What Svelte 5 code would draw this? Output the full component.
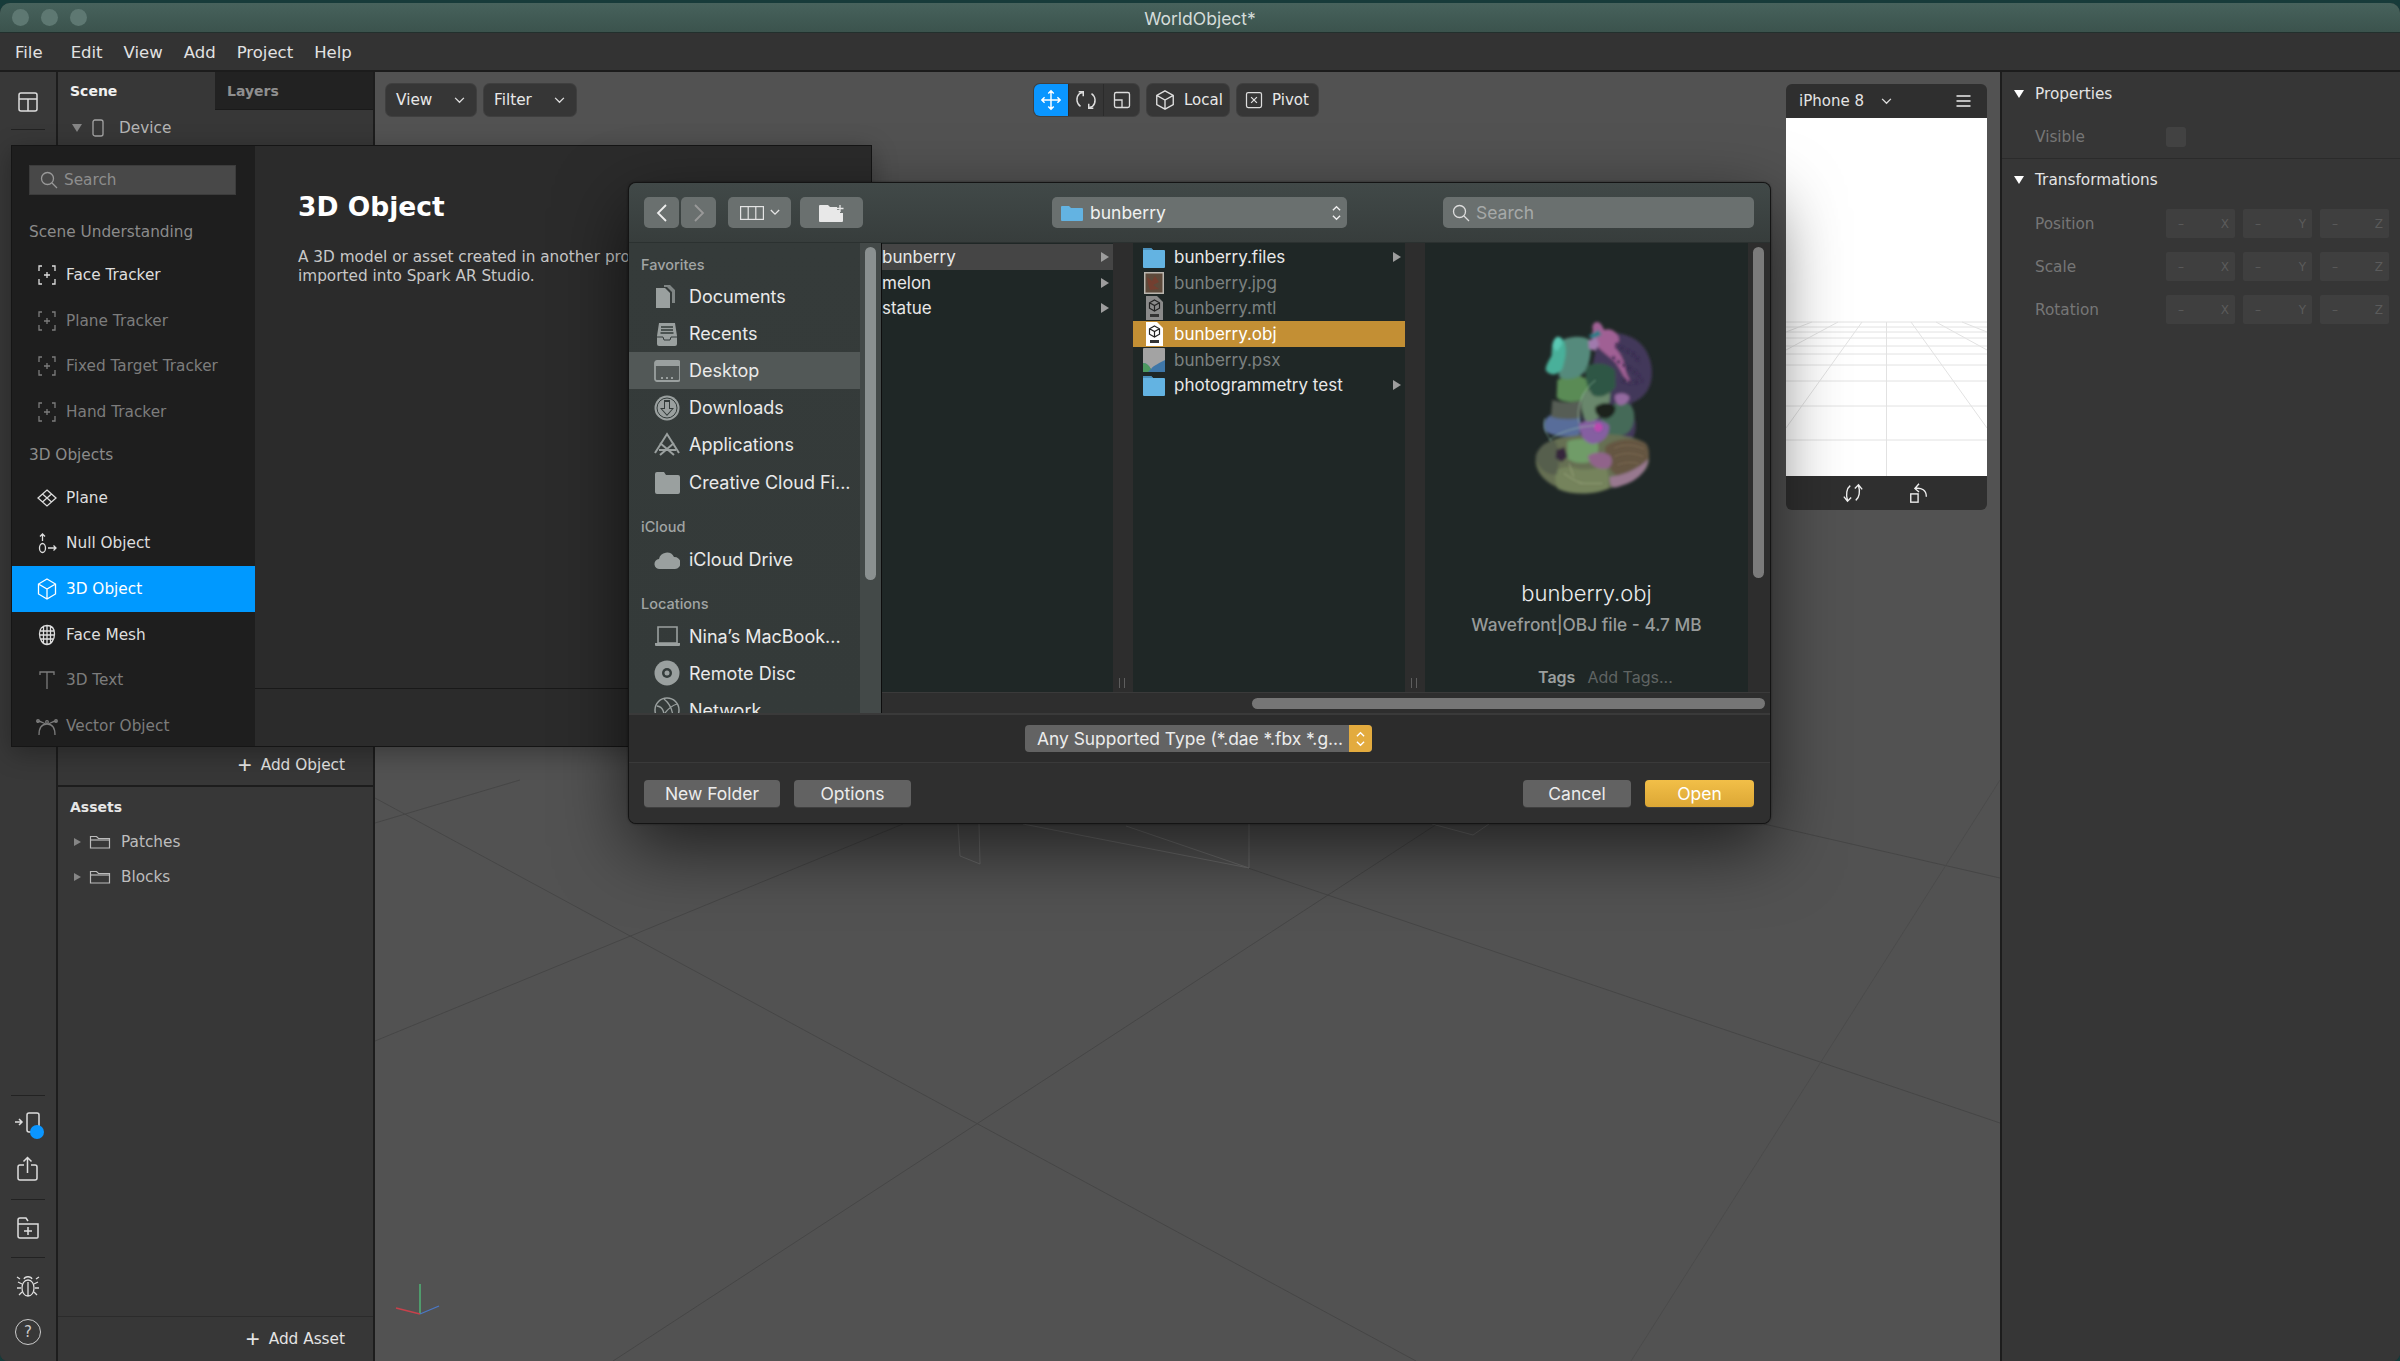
<script>
  const menu = ['File', 'Edit', 'View', 'Add', 'Project', 'Help'];

  const addList = [
    { head: 'Scene Understanding' },
    { label: 'Face Tracker', icon: 'tracker' },
    { label: 'Plane Tracker', icon: 'tracker', off: true },
    { label: 'Fixed Target Tracker', icon: 'tracker', off: true },
    { label: 'Hand Tracker', icon: 'tracker', off: true },
    { head: '3D Objects' },
    { label: 'Plane', icon: 'plane' },
    { label: 'Null Object', icon: 'null' },
    { label: '3D Object', icon: 'cube', active: true },
    { label: 'Face Mesh', icon: 'mesh' },
    { label: '3D Text', icon: 'text', off: true },
    { label: 'Vector Object', icon: 'vector', off: true }
  ];

  const sidebar = [
    { head: 'Favorites' },
    { label: 'Documents', icon: 'docs' },
    { label: 'Recents', icon: 'recents' },
    { label: 'Desktop', icon: 'desktop', active: true },
    { label: 'Downloads', icon: 'downloads' },
    { label: 'Applications', icon: 'apps' },
    { label: 'Creative Cloud Fi...', icon: 'folder' },
    { head: 'iCloud', gap: true },
    { label: 'iCloud Drive', icon: 'cloud' },
    { head: 'Locations', gap: true },
    { label: 'Nina’s MacBook...', icon: 'laptop' },
    { label: 'Remote Disc', icon: 'disc' },
    { label: 'Network', icon: 'network' }
  ];

  const folders = ['bunberry', 'melon', 'statue'];

  const files = [
    { name: 'bunberry.files', kind: 'dir' },
    { name: 'bunberry.jpg', kind: 'jpg', dim: true },
    { name: 'bunberry.mtl', kind: 'mtl', dim: true },
    { name: 'bunberry.obj', kind: 'obj', active: true },
    { name: 'bunberry.psx', kind: 'psx', dim: true },
    { name: 'photogrammetry test', kind: 'dir' }
  ];

  const transforms = ['Position', 'Scale', 'Rotation'];

  // floor grid of the viewport, page coordinates minus the viewport origin
  const grid = [
    [0, 726, 1041, 1289],
    [238, 1289, 1062, 752],
    [0, 969, 528, 752],
    [0, 751, 145, 708],
    [870, 795, 1625, 1051],
    [1389, 752, 1625, 806]
  ];
  const faint = [
    [583, 752, 585, 784], [585, 784, 605, 792], [605, 792, 604, 752],
    [648, 752, 874, 796], [751, 754, 874, 796], [874, 752, 874, 796],
    [1057, 752, 1098, 763], [1098, 763, 1114, 752]
  ];
</script>

{#snippet addIcon(name)}
  <svg class="ico" viewBox="0 0 22 24" width="22" height="24" fill="none" stroke="currentColor" stroke-width="1.3">
    {#if name === 'tracker'}
      <path d="M6 3H3v5M16 3h3v5M6 21H3v-5M16 21h3v-5M11 9v6M8 12h6" />
    {:else if name === 'plane'}
      <path d="M11 4l9 8-9 8-9-8zM6.5 8l9 8M15.5 8l-9 8" />
    {:else if name === 'null'}
      <ellipse cx="6.5" cy="17" rx="3" ry="4.5" /><path d="M6.5 10V3M4 5.500l2.500-2.500L9 5.500M12 17h8M17.500 14.500L20 17l-2.500 2.500" />
    {:else if name === 'cube'}
      <path d="M11 2l8.500 5v10L11 22l-8.500-5V7zM2.500 7L11 12l8.500-5M11 12v10" />
    {:else if name === 'mesh'}
      <path d="M11 2.500c5 0 7.500 3.500 7.500 8.500 0 6-3.500 10.500-7.500 10.500S3.500 17 3.500 11c0-5 2.500-8.500 7.500-8.500zM7.500 3.500v17M11 2.500v19M14.500 3.500v17M3.500 8h15M3.500 12h15M5 16h12" />
    {:else if name === 'text'}
      <path d="M4 7V4h14v3M11 4v17" />
    {:else if name === 'vector'}
      <path d="M3 21c0-7 3-11 8-11s8 4 8 11M1 7c6 0 6 3 10 3s4-3 10-3" /><circle cx="2" cy="7" r="1.300" /><circle cx="20" cy="7" r="1.300" /><circle cx="11" cy="8" r="1.300" />
    {/if}
  </svg>
{/snippet}

{#snippet placeIcon(name)}
  <svg class="place" viewBox="0 0 26 26" width="26" height="26" fill="#9aa09f">
    {#if name === 'docs'}
      <path d="M2 4h9l5 5v15H2z" /><path d="M10 1h6l5 5v13h-3V8l-5-5h-3z" opacity=".75" />
    {:else if name === 'recents'}
      <path d="M3 15l2-13h16l2 13v8a2 2 0 0 1-2 2H5a2 2 0 0 1-2-2z" /><path d="M7 6h12M7 9h12M6.500 12h13" stroke="#333b3a" stroke-width="1.300" /><path d="M3 16h6l1 3h6l1-3h6" fill="none" stroke="#333b3a" />
    {:else if name === 'desktop'}
      <rect x="1" y="3" width="25" height="20" rx="2" fill="none" stroke="#9aa09f" stroke-width="1.800" /><rect x="1" y="3" width="25" height="5" /><path d="M7 19h2v2H7zM12 19h2v2h-2zM17 19h2v2h-2z" />
    {:else if name === 'downloads'}
      <circle cx="13" cy="13" r="12.500" /><circle cx="13" cy="13" r="10" fill="none" stroke="#333b3a" stroke-width="1" /><path d="M10 5h6v8h4l-7 8-7-8h4z" fill="#333b3a" /><path d="M11 7h4v7h3l-5 5.500L8 14h3z" />
    {:else if name === 'apps'}
      <path d="M1 21L13 2l12 19M6 11l14 12M20 11L6 23M5 18h17" fill="none" stroke="#9aa09f" stroke-width="2" />
    {:else if name === 'folder'}
      <path d="M1 5a2 2 0 0 1 2-2h7l2 3h12a2 2 0 0 1 2 2v15a2 2 0 0 1-2 2H3a2 2 0 0 1-2-2z" />
    {:else if name === 'cloud'}
      <path d="M6 23a5 5 0 0 1-1-10 8 8 0 0 1 15-2 6 6 0 0 1 1 12z" />
    {:else if name === 'laptop'}
      <path d="M4 4h19v16H4z" fill="none" stroke="#9aa09f" stroke-width="1.600" /><path d="M1 20h25v2a1 1 0 0 1-1 1H2a1 1 0 0 1-1-1z" />
    {:else if name === 'disc'}
      <circle cx="13" cy="13" r="12.500" /><circle cx="13" cy="13" r="5" fill="#333b3a" /><circle cx="13" cy="13" r="2.500" />
    {:else if name === 'network'}
      <circle cx="13" cy="13" r="12" fill="none" stroke="#9aa09f" stroke-width="1.500" /><path d="M3 9c6 1 8 6 6 14M10 2c5 4 9 11 9 20M23 7c-6 2-11 6-15 14" fill="none" stroke="#9aa09f" stroke-width="1.300" />
    {/if}
  </svg>
{/snippet}

{#snippet fileIcon(kind)}
  <svg class="fileico" viewBox="0 0 22 24" width="22" height="24">
    {#if kind === 'dir'}
      <path d="M0 4a1 1 0 0 1 1-1h7l2 2h11a1 1 0 0 1 1 1v16a1 1 0 0 1-1 1H1a1 1 0 0 1-1-1z" fill="#63b3e2" /><path d="M0 4a1 1 0 0 1 1-1h7l2 2H0z" fill="#4a8fbb" />
    {:else if kind === 'jpg'}
      <rect x="1" y="1" width="20" height="22" fill="#b9b5ae" /><rect x="2.500" y="2.500" width="17" height="19" fill="#5d4a3b" /><path d="M4 6l5 4 3-5 4 6-6 3 6 4-9 1-2-6z" fill="#7d3a2c" opacity=".7" />
    {:else if kind === 'psx'}
      <rect x="0" y="0" width="22" height="24" rx="1" fill="#a3a3a3" /><path d="M0 24v-9c4 0 6 3 8 6 3-4 9-6 14-9v12z" fill="#3f77a8" /><path d="M0 15c4 0 6 3 8 6l-3 3H0z" fill="#4d9a60" />
    {:else}
      <path d="M3 0h11l6 6v18H3z" fill={kind === 'obj' ? '#fff' : '#8a8a8a'} />
      <path d="M11.500 4l5 2.800v5.400l-5 2.800-5-2.800V6.800zM6.500 6.800l5 2.800 5-2.800M11.500 9.600V15" fill="none" stroke="#222" stroke-width="1.200" />
      <rect x="7" y="18" width="9" height="3" fill="#333" />
    {/if}
  </svg>
{/snippet}

<div class="win">
  <header class="titlebar">
    <span class="lights"><i></i><i></i><i></i></span>
    <span class="title">WorldObject*</span>
  </header>

  <nav class="menubar">
    {#each menu as m}<span class="menu-item">{m}</span>{/each}
  </nav>

  <div class="work">
    <aside class="rail">
      <div class="rail-top">
        <svg viewBox="0 0 24 24" width="24" height="24" fill="none" stroke="#ddd" stroke-width="1.500"><rect x="3" y="3" width="18" height="18" rx="2" /><path d="M3 9h18M12 9v12" /></svg>
        <div class="rail-sep"></div>
      </div>
      <div class="rail-bottom">
        <div class="rail-sep"></div>
        <div class="device-ico">
          <svg viewBox="0 0 34 26" width="34" height="26" fill="none" stroke="#ddd" stroke-width="1.500"><rect x="14" y="2" width="12" height="19" rx="2" /><path d="M2 11h7M6 8l3 3-3 3" /></svg>
          <i class="dot"></i>
        </div>
        <svg class="r2" viewBox="0 0 24 26" width="24" height="26" fill="none" stroke="#ddd" stroke-width="1.500"><path d="M8 9H4a2 2 0 0 0-2 2v11a2 2 0 0 0 2 2h15a2 2 0 0 0 2-2V11a2 2 0 0 0-2-2h-4M11.500 17V2M7.500 5.500l4-4 4 4" /></svg>
        <div class="rail-sep s2"></div>
        <svg class="r3" viewBox="0 0 24 24" width="24" height="24" fill="none" stroke="#ddd" stroke-width="1.500"><path d="M2 20V4a2 2 0 0 1 2-2h6l2 3M2 8h20v13a1 1 0 0 1-1 1H4a2 2 0 0 1-2-2zM12 11v8M8 15h8" /></svg>
        <div class="rail-sep s3"></div>
        <svg class="r4" viewBox="0 0 24 24" width="24" height="24" fill="none" stroke="#ddd" stroke-width="1.300"><path d="M12 6c4 0 6 4 6 8s-2 8-6 8-6-4-6-8 2-8 6-8zM12 8v14M8 5c1-3 7-3 8 0M6 10L2 8M18 10l4-2M5 14H1M19 14h4M6 18l-3 3M18 18l3 3M1 3l3 2M23 3l-3 2" /></svg>
        <span class="help">?</span>
      </div>
    </aside>

    <section class="scene">
      <div class="scene-top">
        <div class="tabs"><span class="tab on">Scene</span><span class="tab">Layers</span></div>
        <div class="device-row">
          <i class="tri-down"></i>
          <svg viewBox="0 0 14 20" width="14" height="20" fill="none" stroke="#a5a5a5" stroke-width="1.300"><rect x="2" y="2" width="10" height="16" rx="2" /></svg>
          <span>Device</span>
        </div>
        <div class="add-row"><span class="plus">+</span>Add Object</div>
      </div>
      <div class="assets">
        <div class="assets-head">Assets</div>
        {#each ['Patches', 'Blocks'] as a}
          <div class="asset">
            <i class="tri-right"></i>
            <svg viewBox="0 0 22 16" width="22" height="16" fill="none" stroke="#bbb" stroke-width="1.200"><path d="M1.500 14V2.500h6l2 2h11V14z" /><path d="M1.500 6h19" /></svg>
            <span>{a}</span>
          </div>
        {/each}
        <div class="add-row foot"><span class="plus">+</span>Add Asset</div>
      </div>
    </section>

    <main class="viewport">
      <svg class="floor" viewBox="0 0 1625 1289" width="1625" height="1289" fill="none">
        {#each grid as [x1, y1, x2, y2]}
          <line {x1} {y1} {x2} {y2} stroke="#464646" />
        {/each}
        <line x1="1256" y1="1289" x2="1625" y2="708" stroke="#4b4b4b" />
        {#each faint as [x1, y1, x2, y2]}
          <line {x1} {y1} {x2} {y2} stroke="#6a6a6a" />
        {/each}
        <line x1="45" y1="1242" x2="45" y2="1212" stroke="#4fc37b" stroke-width="1.300" />
        <line x1="45" y1="1242" x2="21" y2="1236" stroke="#c8414b" stroke-width="1.300" />
        <line x1="45" y1="1242" x2="64" y2="1234" stroke="#4a78c8" stroke-width="1.300" />
      </svg>

      <div class="toolbar">
        <div class="drop">View<svg viewBox="0 0 12 8" width="11" height="7"><path d="M1 1l5 5 5-5" fill="none" stroke="#ddd" stroke-width="1.500" /></svg></div>
        <div class="drop filter">Filter<svg viewBox="0 0 12 8" width="11" height="7"><path d="M1 1l5 5 5-5" fill="none" stroke="#ddd" stroke-width="1.500" /></svg></div>
        <div class="tgroup">
          <span class="tbtn on">
            <svg viewBox="0 0 24 24" width="22" height="22" fill="none" stroke="#fff" stroke-width="1.600"><path d="M12 2v20M2 12h20M9 5l3-3 3 3M9 19l3 3 3-3M5 9l-3 3 3 3M19 9l3 3-3 3" /></svg>
          </span>
          <span class="tbtn">
            <svg viewBox="0 0 24 24" width="22" height="22" fill="none" stroke="#ddd" stroke-width="1.600"><path d="M18 5a9 9 0 0 1 1 14l-3 1M6 19A9 9 0 0 1 5 5l3-1M15 16v5h5M9 8V3H4" /></svg>
          </span>
          <span class="tbtn">
            <svg viewBox="0 0 24 24" width="20" height="20" fill="none" stroke="#ddd" stroke-width="1.600"><rect x="3" y="3" width="18" height="18" rx="2" /><path d="M3 12h9v9" /></svg>
          </span>
        </div>
        <div class="tool local">
          <svg viewBox="0 0 24 24" width="22" height="22" fill="none" stroke="#ddd" stroke-width="1.500"><path d="M12 2l9 5v10l-9 5-9-5V7zM3 7l9 5 9-5M12 12v10" /></svg>Local
        </div>
        <div class="tool pivot">
          <svg viewBox="0 0 24 24" width="20" height="20" fill="none" stroke="#ddd" stroke-width="1.500"><rect x="3" y="3" width="18" height="18" rx="2" /><path d="M8.500 8.500l7 7M15.500 8.500l-7 7" /></svg>Pivot
        </div>
      </div>

      <div class="phone">
        <div class="phone-head">
          <span>iPhone 8</span>
          <svg viewBox="0 0 12 8" width="11" height="7"><path d="M1 1l5 5 5-5" fill="none" stroke="#ddd" stroke-width="1.500" /></svg>
          <svg class="burger" viewBox="0 0 14 12" width="15" height="12"><path d="M0 1h14M0 6h14M0 11h14" stroke="#eee" stroke-width="1.400" /></svg>
        </div>
        <div class="phone-screen">
          <svg viewBox="0 0 201 358" width="201" height="358" fill="none" stroke="#e2e2e2">
            <path d="M0 204h201M0 209h201M0 214h201M0 220h201M0 228h201M0 236h201M0 247h201M0 263h201M0 288h201M0 322h201" />
            <path d="M100.500 204v154M76 204L0 310M52 204L0 232M26 204L0 214M125 204l76 106M150 204l51 28M176 204l25 10" />
          </svg>
        </div>
        <div class="phone-foot">
          <svg viewBox="0 0 24 24" width="22" height="22" fill="none" stroke="#eee" stroke-width="1.500"><path d="M9 4C5 7 4 14 6 20M15 20c4-3 5-10 3-16M2 16l4 5 4-4M14 7l4-4 4 5" /></svg>
          <svg viewBox="0 0 24 24" width="22" height="22" fill="none" stroke="#eee" stroke-width="1.500"><rect x="3" y="13" width="8" height="9" /><path d="M20 16C20 9 15 6 8 7M12 2L7.500 7l4.500 4" /></svg>
        </div>
      </div>

      <aside class="popup">
        <div class="popup-list">
          <div class="popup-search">
            <svg viewBox="0 0 18 18" width="18" height="18" fill="none" stroke="#999" stroke-width="1.300"><circle cx="7.500" cy="7.500" r="6" /><path d="M12 12l5 5" /></svg>
            Search
          </div>
          {#each addList as it}
            {#if it.head}
              <div class="pl-head">{it.head}</div>
            {:else}
              <div class="pl-row" class:off={it.off} class:active={it.active}>
                {@render addIcon(it.icon)}
                <span>{it.label}</span>
              </div>
            {/if}
          {/each}
        </div>
        <div class="popup-main">
          <div class="popup-body">
            <h1>3D Object</h1>
            <p>A 3D model or asset created in another program and<br />imported into Spark AR Studio.</p>
          </div>
          <div class="popup-foot"></div>
        </div>
      </aside>
    </main>

    <aside class="props">
      <div class="prop-sec first">
        <div class="prop-head"><i class="tri-white"></i>Properties</div>
        <div class="prop-row"><span class="prop-label">Visible</span><span class="check"></span></div>
      </div>
      <div class="prop-sec">
        <div class="prop-head"><i class="tri-white"></i>Transformations</div>
        {#each transforms as t}
          <div class="prop-row vec">
            <span class="prop-label">{t}</span>
            {#each ['X', 'Y', 'Z'] as axis}
              <span class="num"><b>–</b><em>{axis}</em></span>
            {/each}
          </div>
        {/each}
      </div>
    </aside>
  </div>

  <div class="dialog">
    <div class="dlg-head">
      <div class="navpair">
        <span class="dbtn nav"><svg viewBox="0 0 14 20" width="14" height="20"><path d="M11 2L3 10l8 8" fill="none" stroke="#eee" stroke-width="1.800" /></svg></span>
        <span class="dbtn nav"><svg viewBox="0 0 14 20" width="14" height="20"><path d="M3 2l8 8-8 8" fill="none" stroke="#999" stroke-width="1.800" /></svg></span>
      </div>
      <span class="dbtn colview">
        <svg viewBox="0 0 24 14" width="24" height="14" fill="none" stroke="#e4e4e4" stroke-width="1.200"><rect x=".6" y=".6" width="22.800" height="12.800" /><path d="M8.200 .6v12.800M15.800 .6v12.800" /></svg>
        <svg viewBox="0 0 12 8" width="10" height="7"><path d="M1 1l5 5 5-5" fill="none" stroke="#e4e4e4" stroke-width="1.600" /></svg>
      </span>
      <span class="dbtn newfold">
        <svg viewBox="0 0 26 18" width="26" height="18"><path d="M0 2a1 1 0 0 1 1-1h8l2 2h7v3h3v3h3v8a1 1 0 0 1-1 1H1a1 1 0 0 1-1-1z" fill="#e8e8e8" /><path d="M21 1v7M17.500 4.500h7" stroke="#e8e8e8" stroke-width="1.300" /></svg>
      </span>
      <span class="dbtn path">
        <svg viewBox="0 0 22 16" width="22" height="16"><path d="M0 2a1 1 0 0 1 1-1h7l2 2h11a1 1 0 0 1 1 1v11a1 1 0 0 1-1 1H1a1 1 0 0 1-1-1z" fill="#63b3e2" /></svg>
        <span class="pathname">bunberry</span>
        <svg class="updown" viewBox="0 0 12 20" width="11" height="18" fill="none" stroke="#eee" stroke-width="1.500"><path d="M2 7l4-4 4 4M2 13l4 4 4-4" /></svg>
      </span>
      <span class="dbtn dsearch">
        <svg viewBox="0 0 18 18" width="18" height="18" fill="none" stroke="#ddd" stroke-width="1.300"><circle cx="7.500" cy="7.500" r="6" /><path d="M12 12l5 5" /></svg>
        Search
      </span>
    </div>

    <div class="browser">
      <div class="sidebar">
        {#each sidebar as s}
          {#if s.head}
            <div class="side-head" class:gap={s.gap}>{s.head}</div>
          {:else}
            <div class="side-row" class:active={s.active}>
              {@render placeIcon(s.icon)}
              <span>{s.label}</span>
            </div>
          {/if}
        {/each}
      </div>
      <div class="side-scroll"><i></i></div>

      <div class="cols">
        <div class="col-area">
          <div class="col c1">
            {#each folders as f, i}
              <div class="frow" class:cur={i === 0}><span>{f}</span><i class="tri-gray"></i></div>
            {/each}
          </div>
          <div class="gutter"><span class="grip"></span></div>
          <div class="col c2">
            {#each files as f}
              <div class="frow file" class:sel={f.active} class:dim={f.dim}>
                {@render fileIcon(f.kind)}
                <span>{f.name}</span>
                {#if f.kind === 'dir'}<i class="tri-gray"></i>{/if}
              </div>
            {/each}
          </div>
          <div class="gutter"><span class="grip"></span></div>
          <div class="preview">
            <!-- painted model, drawn in a 3x grid so the patches can be placed from the reference -->
            <svg class="bunny" viewBox="0 0 600 630" width="200" height="210">
              <defs>
                <filter id="soft"><feGaussianBlur stdDeviation="5" /></filter>
                <filter id="soft2"><feGaussianBlur stdDeviation="3" /></filter>
              </defs>
              <g filter="url(#soft)">
                <path d="M300 100c50-6 110 0 140 50 24 40 24 90 6 120-12 20-30 32-50 40l14 60c4 40-20 60-30 66l-60 10-70-90z" fill="#43385a" />
                <path d="M320 320c30-10 60-20 78 0 14 20 10 60-14 80l-50 20-40-40z" fill="#456a58" />
                <path d="M110 480c2-30 30-56 70-66 60-14 180-20 240 6 24 10 32 36 30 62-4 34-40 58-90 72-50 22-110 36-170 14-50-18-80-50-80-88z" fill="#667052" />
                <path d="M318 440c30-26 90-30 120-12 12 8 14 36 10 52-14 24-60 44-96 46-24-16-34-50-34-86z" fill="#655642" />
                <path d="M332 530c30 0 80-18 116-52-4 40-40 70-90 82-16 6-26 2-26-30z" fill="#98788f" />
                <path d="M172 510c20-10 40-12 60-4 30 6 60-2 88-6 10 20 12 46 6 66-30 14-100 24-150 0-8-20-10-40-4-56z" fill="#75835c" />
                <path d="M110 470c6-26 30-46 56-50 16 20 18 70 6 104-30 2-58-20-62-54z" fill="#565e4e" />
                <path d="M205 425c20-10 60-12 90 0 8 20 0 50-20 60-26 8-56 4-70-10z" fill="#6f9c68" />
                <path d="M266 468c20-14 56-14 70 2 6 14 2 32-14 36-20 2-50-4-56-38z" fill="#90648a" />
                <path d="M172 450l24-8 10 28-18 16-18-12z" fill="#35283a" />
                <path d="M140 395c-10-20-6-40 16-50l90-6-4 66c-30 6-70 8-102-10z" fill="#586d9a" />
                <path d="M160 300c30 10 60 10 90 0l-6 55c-30 4-60 4-88-4z" fill="#565d54" />
                <path d="M175 240c30-16 70-20 90 0 10 20 0 50-16 60-24 8-60 10-76-8z" fill="#5a8b55" />
                <path d="M240 370c30-14 70-14 90 6 4 30-20 54-50 56-26-4-40-30-40-62z" fill="#855ea1" />
                <path d="M250 285c20-24 60-30 85-14l-4 40c-20 40-50 60-70 52-14-22-18-50-11-78z" fill="#69876c" />
                <path d="M195 118c26-12 60-10 78 2 6 30 0 80-20 100-20 18-50 22-74 10z" fill="#558a7b" />
                <path d="M140 210c0-16 12-30 18-44 0-24 4-50 18-56 10 0 20 8 22 24 6 24-2 52-8 72-12 20-38 24-50 4z" fill="#48b09a" />
                <path d="M160 140c0-14 6-26 16-30 10 2 14 12 12 24l-14 20z" fill="#5ac8b4" />
                <path d="M262 200c24-14 60-14 86 10l2 50c-16 24-50 38-70 24-16-24-26-56-18-84z" fill="#2d5645" />
                <path d="M282 90c-6-14 4-24 12-24 12 0 16 14 22 24 18-8 40 6 44 26 0 14-10 20-14 26 18 16 30 40 34 70 6 20 14 24 12 36-20-14-26-40-44-62-14-16-44-34-62-58-8-14-8-28-4-38z" fill="#a06094" />
                <path d="M268 108l30-18 10 14-26 14z" fill="#2d7c88" />
                <path d="M268 122l24-10 8 22-12 18-18-6z" fill="#a07aad" />
                <path d="M348 286c14-10 34-8 44 6-2 12-14 24-28 24-12-2-18-16-16-30z" fill="#946ba0" />
                <path d="M288 322c14-16 44-18 60-4 6 14-6 34-26 38-20 2-36-14-34-34z" fill="#1c231e" />
              </g>
              <g filter="url(#soft2)">
                <path d="M150 420c40-30 90-40 140-44M290 240c-40 30-60 80-50 130" fill="none" stroke="#a5d0b0" stroke-width="4" opacity=".4" />
                <path d="M138 355c-8 30 6 50 20 70" fill="none" stroke="#9fd6c6" stroke-width="3" opacity=".5" />
                <circle cx="298" cy="382" r="13" fill="#d23eb5" opacity=".7" />
                <path d="M350 130c30 30 60 20 70 60M340 170c30 30 60 30 80 60M370 240c20 10 40 10 60 0" fill="none" stroke="#34294a" stroke-width="9" stroke-dasharray="10 9" opacity=".7" />
                <path d="M345 445c25-12 55-14 90 2M345 470c25-12 55-14 88 0M355 495c20-8 40-10 65-4" fill="none" stroke="#87745a" stroke-width="3" opacity=".7" />
                <path d="M210 490l14 40M240 550h70M195 520c20 14 40 30 60 30" fill="none" stroke="#a3ad85" stroke-width="4" opacity=".5" />
              </g>
            </svg>
            <div class="pv-name">bunberry.obj</div>
            <div class="pv-meta">Wavefront|OBJ file - 4.7 MB</div>
            <div class="pv-tags"><b>Tags</b><span>Add Tags...</span></div>
          </div>
          <div class="pv-scroll"><i></i></div>
        </div>
        <div class="hscroll"><i></i></div>
      </div>
    </div>

    <div class="filter-row">
      <span class="type-pop"><span class="type-text">Any Supported Type (*.dae *.fbx *.g...</span>
        <span class="type-cap"><svg viewBox="0 0 12 20" width="11" height="18" fill="none" stroke="#fff" stroke-width="1.500"><path d="M2 7l4-4 4 4M2 13l4 4 4-4" /></svg></span>
      </span>
    </div>

    <div class="dlg-foot">
      <span class="pbtn w136">New Folder</span>
      <span class="pbtn w117">Options</span>
      <span class="pbtn w108 right">Cancel</span>
      <span class="pbtn w109 open">Open</span>
    </div>
  </div>
</div>

<style>
  :global(body) {
    margin: 0;
    background: #173b3a;
    overflow: hidden;
  }

  .win {
    position: relative;
    width: 2400px;
    height: 1358px;
    margin-top: 3px;
    border-radius: 10px 10px 8px 8px;
    overflow: hidden;
    display: flex;
    flex-direction: column;
    background: #363636;
    font-family: "DejaVu Sans", sans-serif;
    font-size: 15.300px;
    color: #ddd;
  }

  .titlebar {
    height: 30px;
    flex: none;
    position: relative;
    display: flex;
    align-items: center;
    justify-content: center;
    padding-top: 2px;
    background: linear-gradient(#47625c, #3b534d);
    border-bottom: 1px solid #22302d;
    box-sizing: border-box;
  }
  .title { color: #d5dcda; font-family: Inter, sans-serif; font-size: 17.500px; }
  .lights { position: absolute; left: 12px; top: 6px; display: flex; gap: 12px; }
  .lights i { width: 17px; height: 17px; border-radius: 50%; background: #5e7872; }

  .menubar {
    height: 39px;
    flex: none;
    display: flex;
    align-items: center;
    padding: 2px 0 0 15px;
    gap: 21px;
    background: #333;
    border-bottom: 2px solid #1c1c1c;
    box-sizing: border-box;
    font-size: 16.500px;
    color: #e2e2e2;
  }
  .menu-item:first-child { margin-right: 7px; }

  .work { flex: 1; display: flex; min-height: 0; }

  .rail {
    width: 56px;
    flex: none;
    display: flex;
    flex-direction: column;
    justify-content: space-between;
    background: #383838;
    border-right: 2px solid #1d1d1d;
    align-items: center;
  }
  .rail-top { padding-top: 18px; display: flex; flex-direction: column; align-items: center; }
  .rail-sep { width: 34px; height: 1px; background: #222; margin-top: 15px; }
  .rail-bottom { display: flex; flex-direction: column; align-items: center; padding-bottom: 16px; }
  .device-ico { position: relative; margin-top: 15px; height: 28px; margin-left: 4px; }
  .dot { position: absolute; left: 17px; top: 14px; width: 14px; height: 14px; border-radius: 50%; background: #0a96ff; }
  .r2 { margin-top: 17px; }
  .s2 { margin-top: 17px; }
  .r3 { margin-top: 16px; }
  .s3 { margin-top: 17px; }
  .r4 { margin-top: 16px; }
  .help {
    margin-top: 21px;
    width: 24px;
    height: 24px;
    border: 1.500px solid #ccc;
    border-radius: 50%;
    text-align: center;
    line-height: 24px;
    font-size: 15px;
    color: #ccc;
  }

  .scene {
    width: 315px;
    flex: none;
    display: flex;
    flex-direction: column;
    border-right: 2px solid #1d1d1d;
    background: #373737;
  }
  .scene-top {
    height: 715px;
    flex: none;
    display: flex;
    flex-direction: column;
    border-bottom: 2px solid #1d1d1d;
    box-sizing: border-box;
  }
  .tabs { display: flex; height: 38px; flex: none; }
  .tab {
    width: 158px;
    background: #222;
    padding: 11px 0 0 12px;
    box-sizing: border-box;
    color: #8f8f8f;
    font-weight: bold;
    font-size: 14px;
    border-bottom: 1px solid #1a1a1a;
  }
  .tab.on { background: #373737; color: #f0f0f0; border-bottom: 0; width: 157px; padding-left: 12px; }
  .device-row { display: flex; align-items: center; gap: 9px; padding: 8px 0 0 14px; color: #b5b5b5; }
  .device-row span { margin-left: 5px; }
  .tri-down { width: 0; height: 0; border: 5.500px solid transparent; border-top: 8px solid #858585; border-bottom: 0; }
  .tri-right { width: 0; height: 0; border: 4.500px solid transparent; border-left: 7px solid #858585; border-right: 0; }

  .add-row {
    margin-top: auto;
    height: 40px;
    display: flex;
    align-items: center;
    justify-content: flex-end;
    padding-right: 28px;
    color: #e4e4e4;
    flex: none;
  }
  .plus { font-size: 24px; font-weight: 200; margin-right: 9px; line-height: 1; font-family: "Liberation Sans", sans-serif; }
  .foot { height: 44px; padding-right: 28px; border-top: 1px solid #2b2b2b; }

  .assets { flex: 1; display: flex; flex-direction: column; }
  .assets-head { font-weight: bold; font-size: 14px; padding: 12px 0 0 12px; color: #e6e6e6; height: 25px; }
  .asset { display: flex; align-items: center; gap: 8px; height: 35px; padding-left: 16px; color: #bdbdbd; }
  .asset span { margin-left: 2px; }

  .viewport {
    flex: 1;
    position: relative;
    background: #525252;
    min-width: 0;
  }
  .floor { position: absolute; left: 0; top: 0; }

  .toolbar {
    position: relative;
    display: flex;
    align-items: flex-start;
    padding: 12px 0 0 11px;
    gap: 8px;
  }
  .drop, .tool, .tgroup {
    height: 32px;
    background: #363636;
    border-radius: 6px;
    box-shadow: 0 0 0 1px #3f3f3f;
    display: flex;
    align-items: center;
    box-sizing: border-box;
    color: #e8e8e8;
  }
  .drop { width: 90px; padding: 0 11px 0 10px; justify-content: space-between; }
  .filter { width: 92px; }
  .tgroup { margin-left: 450px; overflow: hidden; }
  .tbtn { width: 35px; height: 32px; display: flex; align-items: center; justify-content: center; border-right: 1px solid #2b2b2b; box-sizing: border-box; }
  .tbtn:last-child { border-right: 0; }
  .tbtn.on { background: #0a96ff; }
  .tool { gap: 8px; padding-left: 7px; white-space: nowrap; font-size: 15px; }
  .local { width: 82px; }
  .pivot { width: 81px; }

  .phone {
    position: absolute;
    left: 1411px;
    top: 12px;
    width: 201px;
    border-radius: 6px;
    overflow: hidden;
    background: #2f2f2f;
  }
  .phone-head { height: 34px; display: flex; align-items: center; padding: 0 16px 0 13px; gap: 17px; color: #e4e4e4; font-size: 15px; }
  .burger { margin-left: auto; }
  .phone-screen { height: 358px; background: #fff; }
  .phone-screen svg { display: block; }
  .phone-foot { height: 34px; display: flex; align-items: center; justify-content: center; gap: 44px; margin-left: -2px; }

  .popup {
    position: absolute;
    left: -364px;
    top: 73px;
    width: 861px;
    height: 602px;
    display: flex;
    border: 1px solid #151515;
    box-sizing: border-box;
    background: #2b2b2b;
    box-shadow: 0 6px 24px rgba(0, 0, 0, 0.3);
  }
  .popup-list { width: 243px; flex: none; background: #1e1e1e; display: flex; flex-direction: column; overflow: hidden; }
  .popup-search {
    margin: 19px 0 0 17px;
    width: 207px;
    height: 30px;
    flex: none;
    background: #484848;
    border: 1px solid #3c3c3c;
    box-sizing: border-box;
    display: flex;
    align-items: center;
    gap: 6px;
    padding-left: 10px;
    color: #8d8d8d;
  }
  .pl-head { height: 40px; display: flex; align-items: center; padding-left: 17px; color: #8b8b8b; flex: none; }
  .popup-search + .pl-head { margin-top: 15px; height: 42px; padding-top: 2px; box-sizing: border-box; }
  .pl-row { height: 45.700px; flex: none; display: flex; align-items: center; padding-left: 24px; gap: 8px; color: #dedede; }
  .pl-row.off { color: #7c7c7c; }
  .pl-row.active { background: #0099ff; color: #fff; }
  .ico { flex: none; }
  .popup-main { flex: 1; display: flex; flex-direction: column; }
  .popup-body { flex: 1; padding: 0 0 0 43px; }
  h1 { margin: 41px 0 0; font-size: 26.500px; line-height: 40px; color: #fff; font-weight: bold; }
  p { margin: 21px 0 0; font-size: 15.300px; line-height: 18.500px; color: #c8c8c8; white-space: nowrap; }
  .popup-foot { height: 57px; flex: none; border-top: 1px solid #191919; }

  .props {
    width: 400px;
    flex: none;
    background: #363636;
    border-left: 2px solid #1d1d1d;
    box-sizing: border-box;
  }
  .prop-sec.first { border-bottom: 1px solid #2b2b2b; height: 87px; box-sizing: border-box; }
  .prop-head { display: flex; align-items: center; height: 44px; padding-left: 12px; gap: 11px; color: #e4e4e4; }
  .prop-sec:not(.first) .prop-head { height: 42px; margin-bottom: 8px; }
  .prop-sec.first .prop-row { margin-top: 6px; }
  .tri-white { width: 0; height: 0; border: 5.500px solid transparent; border-top: 8px solid #fff; border-bottom: 0; }
  .prop-row { display: flex; align-items: center; height: 30px; padding-left: 33px; color: #767676; }
  .prop-row.vec { height: 29px; margin-bottom: 14px; }
  .prop-label { width: 131px; flex: none; }
  .check { width: 20px; height: 20px; background: #424242; border-radius: 3px; }
  .num {
    width: 69px;
    height: 29px;
    margin-right: 8px;
    background: #3f3f3f;
    border-radius: 2px;
    display: flex;
    align-items: center;
    justify-content: space-between;
    padding: 0 6px 0 12px;
    box-sizing: border-box;
    color: #5b5b5b;
    font-size: 12px;
  }
  .num b { font-weight: normal; }
  .num em { font-style: normal; }

  /* file dialog sheet */
  .dialog {
    position: absolute;
    left: 629px;
    top: 180px;
    width: 1141px;
    height: 640px;
    display: flex;
    flex-direction: column;
    border-radius: 7px;
    background: #2e2e2e;
    box-shadow: 0 0 0 1px #141414, 0 0 3px #000, 0 24px 70px rgba(0, 0, 0, 0.62);
    overflow: hidden;
    font-family: Inter, "Liberation Sans", sans-serif;
    font-size: 17px;
    color: #e8e8e8;
  }
  .dlg-head {
    height: 60px;
    flex: none;
    position: relative;
    display: flex;
    align-items: center;
    padding-left: 15px;
    gap: 12px;
    background: linear-gradient(#414948, #373d3c);
    border-bottom: 1px solid #2b3130;
    box-sizing: border-box;
  }
  .dbtn {
    height: 31px;
    background: #6a706f;
    border-radius: 5px;
    display: flex;
    align-items: center;
    justify-content: center;
    box-sizing: border-box;
  }
  .navpair { display: flex; gap: 2px; }
  .nav { width: 35px; }
  .colview { width: 63px; gap: 6px; }
  .newfold { width: 63px; margin-left: -3px; }
  .path {
    position: absolute;
    left: 423px;
    top: 14px;
    width: 295px;
    justify-content: flex-start;
    padding-left: 9px;
    gap: 7px;
  }
  .pathname { font-size: 17.500px; color: #f0f0f0; }
  .updown { margin-left: auto; margin-right: 5px; }
  .dsearch {
    position: absolute;
    left: 814px;
    top: 14px;
    width: 311px;
    justify-content: flex-start;
    padding-left: 9px;
    gap: 6px;
    color: #a6a9a8;
    font-size: 17.500px;
  }

  .browser { height: 472px; flex: none; display: flex; border-bottom: 2px solid #3a3a3a; box-sizing: border-box; }
  .sidebar {
    width: 231px;
    flex: none;
    overflow: hidden;
    background: linear-gradient(#353b3a, #343a39);
  }
  .side-head { height: 24px; padding: 11px 0 0 12px; font-size: 14.500px; font-weight: 500; color: #a1a5a4; line-height: 21px; box-sizing: content-box; }
  .side-head.gap { padding-top: 15px; height: 25px; }
  .side-row {
    height: 37.100px;
    display: flex;
    align-items: center;
    gap: 9px;
    padding-left: 25px;
    white-space: nowrap;
    font-size: 18px;
    color: #eaeaea;
  }
  .side-row.active { background: #525857; }
  .place { flex: none; }
  .side-scroll { width: 22px; flex: none; background: #434948; border-right: 1px solid #0d0d0d; box-sizing: border-box; }
  .side-scroll i { display: block; width: 11px; height: 333px; margin: 4px 0 0 5px; border-radius: 6px; background: #8a9090; }

  .cols { flex: 1; display: flex; flex-direction: column; min-width: 0; }
  .col-area { height: 450px; flex: none; display: flex; border-bottom: 1px solid #3a3a3a; box-sizing: border-box; background: #2d2d2d; }
  .col { background: #1f2726; padding-top: 1px; box-sizing: border-box; }
  .c1 { width: 231px; }
  .c2 { width: 272px; }
  .gutter { width: 20px; flex: none; position: relative; }
  .grip { position: absolute; left: 6px; bottom: 4px; width: 2px; height: 10px; border-left: 1px solid #5e5e5e; border-right: 1px solid #5e5e5e; padding: 0 1px; }
  .frow {
    height: 25.700px;
    display: flex;
    align-items: center;
    justify-content: space-between;
    padding-right: 4px;
    color: #e8e8e8;
    box-sizing: border-box;
  }
  .frow.cur { background: #454545; }
  .tri-gray { width: 0; height: 0; border: 5px solid transparent; border-left: 8px solid #9d9d9d; border-right: 0; }
  .file { justify-content: flex-start; padding-left: 10px; gap: 9px; }
  .file .tri-gray { margin-left: auto; }
  .file.dim { color: #7c8180; }
  .file.sel { background: #c38f34; color: #fff; }
  .fileico { flex: none; }

  .preview {
    width: 323px;
    flex: none;
    background: #1f2726;
    position: relative;
    display: flex;
    flex-direction: column;
    align-items: center;
  }
  .bunny { position: absolute; left: 74px; top: 57px; }
  .pv-name { margin-top: 337px; font-size: 22px; font-weight: 300; color: #ececec; }
  .pv-meta { margin-top: 8px; font-size: 17.300px; font-weight: 500; color: #979b9a; }
  .pv-tags { position: absolute; left: 113px; bottom: 5px; font-size: 16px; color: #5f6463; display: flex; gap: 12px; }
  .pv-tags b { color: #9b9f9e; font-weight: 600; }
  .pv-scroll { width: 21px; flex: none; background: #2d2d2d; }
  .pv-scroll i { display: block; width: 11px; height: 331px; margin: 4px 0 0 5px; border-radius: 6px; background: #7b7b7b; }
  .hscroll { flex: 1; position: relative; }
  .hscroll i { position: absolute; left: 370px; right: 5px; top: 5px; height: 11px; border-radius: 6px; background: #767676; }

  .filter-row { height: 48px; flex: none; border-bottom: 1px solid #3a3a3a; display: flex; align-items: center; justify-content: flex-start; padding-left: 396px; box-sizing: border-box; background: #2c2c2c; }
  .type-pop { width: 347px; height: 27px; background: #636363; border-radius: 4px; display: flex; align-items: center; overflow: hidden; font-size: 17.400px; }
  .type-text { padding-left: 12px; flex: 1; white-space: nowrap; overflow: hidden; color: #ececec; }
  .type-cap { width: 23px; height: 27px; flex: none; background: #e3ab3e; display: flex; align-items: center; justify-content: center; }

  .dlg-foot { height: 60px; flex: none; display: flex; align-items: flex-start; padding: 17px 16px 0 15px; gap: 14px; background: #2f2f2f; box-sizing: border-box; }
  .pbtn { height: 27px; background: #626262; border-radius: 4px; display: flex; align-items: center; justify-content: center; font-size: 17.500px; color: #ececec; box-shadow: 0 1px 0 #3f3f3f; }
  .w136 { width: 136px; }
  .w117 { width: 117px; }
  .w108 { width: 108px; }
  .w109 { width: 109px; }
  .right { margin-left: auto; }
  .open { background: linear-gradient(#f2bf48, #dca735); color: #fff; }
</style>
